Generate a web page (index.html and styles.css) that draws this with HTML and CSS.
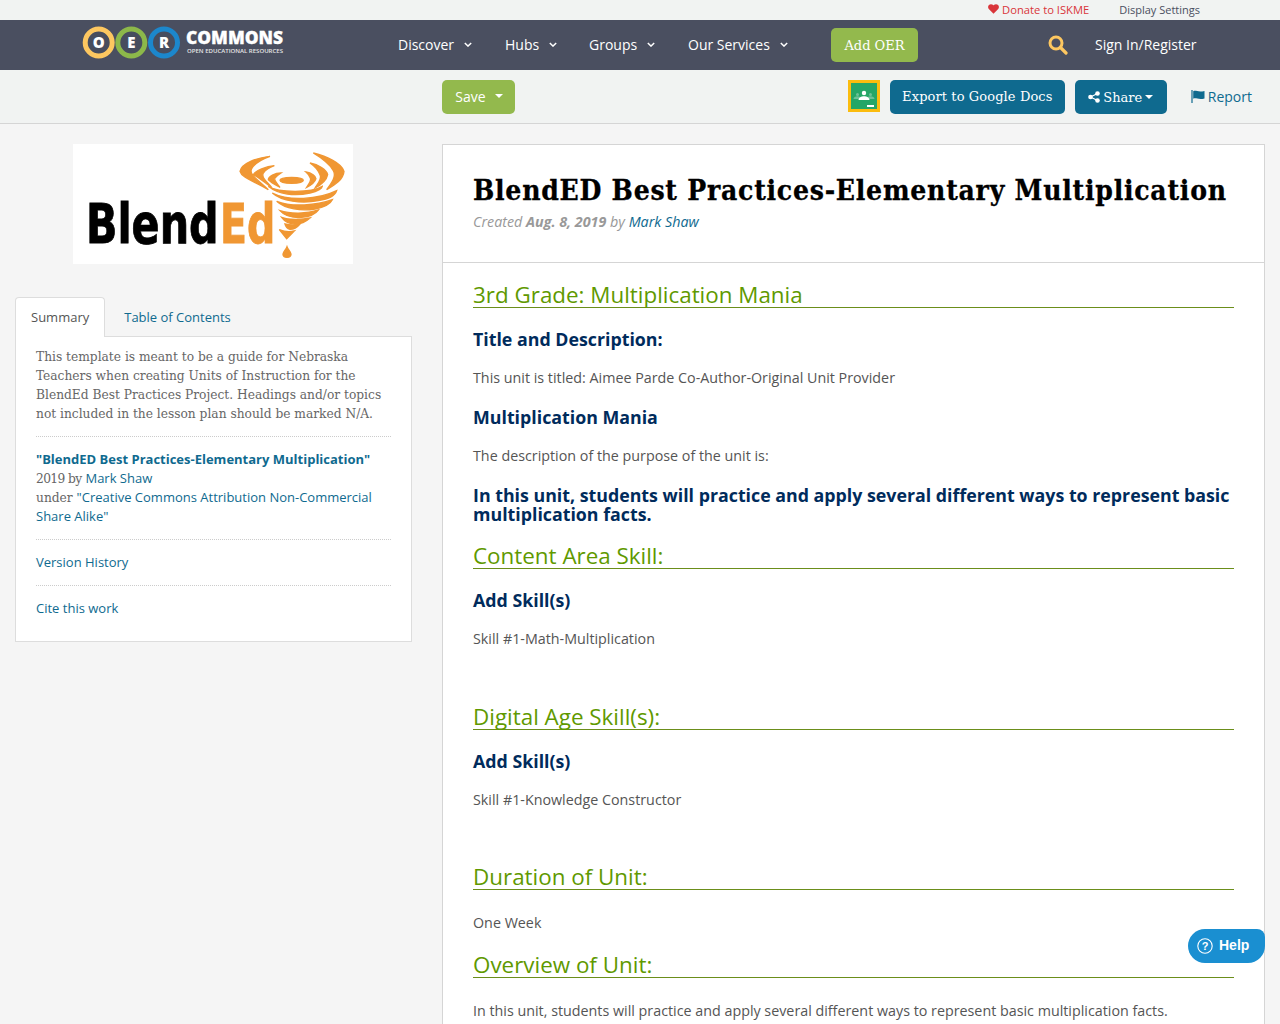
FILE: index.html
```html
<!DOCTYPE html>
<html lang="en">
<head>
    <meta charset="UTF-8">
    <title>BlendED Best Practices-Elementary Multiplication</title>
    <link rel="stylesheet" href="styles.css">
</head>
<body>
    <div class="top-bar">
        <a class="donate" href="#">
            <svg class="heart" viewBox="0 0 24 22" width="11" height="10"><path d="M12 21.500 2.200 11.600C-.6 8.800-.6 4.600 1.900 2.200c2.600-2.600 6.800-2.500 9.400.2l.7.800.7-.8c2.600-2.700 6.800-2.800 9.400-.2 2.500 2.400 2.500 6.600-.3 9.400z" fill="#d9353a"/></svg>
            Donate to ISKME</a>
        <a class="settings" href="#">Display Settings</a>
    </div>

    <nav class="main-nav">
        <a class="logo" href="#">
            <svg viewBox="0 0 214 40" width="214" height="40">
                <circle cx="16.700" cy="17.500" r="13.500" fill="#474d5e" stroke="#fdc760" stroke-width="5"/>
                <circle cx="49.300" cy="17.500" r="13.500" fill="#474d5e" stroke="#8cb84a" stroke-width="5"/>
                <circle cx="82" cy="17.500" r="13.500" fill="#474d5e" stroke="#1c87cc" stroke-width="5"/>
                <text class="logo-letter" x="16.700" y="23">O</text>
                <text class="logo-letter" x="49.300" y="23">E</text>
                <text class="logo-letter" x="82" y="23">R</text>
                <text class="logo-name" x="104" y="19" textLength="97" lengthAdjust="spacingAndGlyphs">COMMONS</text>
                <text class="logo-sub" x="105" y="28" textLength="96" lengthAdjust="spacingAndGlyphs">OPEN EDUCATIONAL RESOURCES</text>
            </svg>
        </a>
        <ul class="nav-links">
            <li class="w-discover"><a href="#">Discover</a><svg class="chev" viewBox="0 0 10 6" width="8" height="5"><path d="M1 1l4 4 4-4" fill="none" stroke="#fff" stroke-width="1.800"/></svg></li>
            <li class="w-hubs"><a href="#">Hubs</a><svg class="chev" viewBox="0 0 10 6" width="8" height="5"><path d="M1 1l4 4 4-4" fill="none" stroke="#fff" stroke-width="1.800"/></svg></li>
            <li class="w-groups"><a href="#">Groups</a><svg class="chev" viewBox="0 0 10 6" width="8" height="5"><path d="M1 1l4 4 4-4" fill="none" stroke="#fff" stroke-width="1.800"/></svg></li>
            <li class="w-services"><a href="#">Our Services</a><svg class="chev" viewBox="0 0 10 6" width="8" height="5"><path d="M1 1l4 4 4-4" fill="none" stroke="#fff" stroke-width="1.800"/></svg></li>
        </ul>
        <a class="btn btn-green btn-add" href="#">Add OER</a>
        <svg class="search" viewBox="0 0 20 20" width="20" height="20"><circle cx="8" cy="8" r="6" fill="none" stroke="#fdc760" stroke-width="3"/><path d="M12.500 12.500 18 18" stroke="#fdc760" stroke-width="3.200" stroke-linecap="round"/></svg>
        <a class="sign-in" href="#">Sign In/Register</a>
    </nav>

    <div class="toolbar">
        <a class="btn btn-green btn-save" href="#">Save <span class="caret"></span></a>
        <div class="toolbar-right">
            <a class="classroom" href="#">
                <svg viewBox="0 0 26 26" width="26" height="26">
                    <rect width="26" height="26" fill="#25a667"/>
                    <circle cx="6.500" cy="11.500" r="1.500" fill="#6cc197"/>
                    <circle cx="19.500" cy="11.500" r="1.500" fill="#6cc197"/>
                    <path d="M2.500 16c0-2 2-2.800 4-2.800s4 .8 4 2.800zM15.500 16c0-2 2-2.800 4-2.800s4 .8 4 2.800z" fill="#6cc197"/>
                    <circle cx="13" cy="10" r="2.200" fill="#fff"/>
                    <path d="M7.500 17c0-2.500 2.800-3.800 5.500-3.800s5.500 1.300 5.500 3.800z" fill="#fff"/>
                    <rect x="16" y="22" width="7" height="2" fill="#fff"/>
                </svg>
            </a>
            <a class="btn btn-blue btn-export" href="#">Export to Google Docs</a>
            <a class="btn btn-blue btn-share" href="#">
                <svg viewBox="0 0 12 12" width="12" height="12"><circle cx="2.500" cy="6" r="2.300" fill="#fff"/><circle cx="9.500" cy="2.500" r="2.300" fill="#fff"/><circle cx="9.500" cy="9.500" r="2.300" fill="#fff"/><path d="M2.500 6l7-3.500M2.500 6l7 3.500" stroke="#fff" stroke-width="1.200"/></svg>
                Share <span class="caret"></span></a>
            <a class="report" href="#">
                <svg viewBox="0 0 14 13" width="14" height="13"><path d="M1 0v13" stroke="#0f6a8f" stroke-width="1.200"/><path d="M2.200 1.200C5 0 7 2.600 13.500 1v7.500C7.500 10 5 7.500 2.200 8.700z" fill="#0f6a8f"/></svg>
                Report</a>
        </div>
    </div>

    <div class="page">
        <aside class="sidebar">
            <div class="cover">
                <svg viewBox="0 0 280 120" width="280" height="120">
                    <rect width="280" height="120" fill="#fff"/>
                    <text class="cover-blend" transform="translate(13 99) scale(.82 1)">Blend</text>
                    <text class="cover-ed" transform="translate(147 99) scale(.785 1)">Ed</text>
                    <g fill="#f09733" stroke="#f09733" stroke-width="4" transform="translate(162 4) scale(.3333)">
                        <path d="M105 25C65 30 20 45 15 70C20 90 60 100 100 125C70 95 40 80 50 62C60 45 85 32 105 25z"/>
                        <path d="M118 53C95 55 60 68 55 80C75 90 90 105 110 118C95 100 78 88 85 75C92 65 105 58 118 53z"/>
                        <path d="M138 75C120 75 100 85 100 95C110 105 125 112 135 118C125 105 115 95 120 90C125 85 130 80 138 75z"/>
                        <path d="M235 15C275 25 320 45 327 70C325 95 300 110 275 125C290 105 305 85 295 68C285 50 260 30 235 15z"/>
                        <path d="M225 45C250 50 275 65 278 80C275 95 260 110 240 120C250 105 262 92 255 80C250 68 240 55 225 45z"/>
                        <path d="M213 72C230 75 243 85 243 92C240 102 228 112 215 118C222 108 230 98 226 90C224 84 220 78 213 72z"/>
                        <ellipse cx="170" cy="97" rx="35" ry="9"/>
                        <path d="M100 115C130 135 230 135 262 115C262 120 250 130 225 135C180 145 130 140 100 115z"/>
                        <path d="M112 135C160 160 250 155 305 128C300 145 280 152 250 158C200 168 140 160 112 135z"/>
                        <path d="M125 160C170 178 245 172 292 155C285 170 265 178 240 183C200 190 150 183 125 160z"/>
                        <path d="M135 188C165 198 215 198 250 186C240 200 220 206 200 208C175 210 150 205 135 188z"/>
                        <path d="M140 208C160 216 200 216 225 210C212 222 195 228 180 228C165 228 150 222 140 208z"/>
                        <path d="M150 228C165 232 180 232 195 228C185 240 172 244 165 244C158 242 152 236 150 228z"/>
                        <path d="M133 245C145 250 165 252 178 249L155 272z"/>
                        <path d="M156 296C160 306 168 312 168 318C168 325 162 328 156 328C150 328 144 325 144 318C144 312 152 306 156 296z"/>
                    </g>
                </svg>
            </div>
            <div class="tabs">
                <a class="tab active" href="#">Summary</a>
                <a class="tab" href="#">Table of Contents</a>
            </div>
            <div class="tab-panel">
                <p class="summary">This template is meant to be a guide for Nebraska Teachers when creating Units of Instruction for the BlendEd Best Practices Project. Headings and/or topics not included in the lesson plan should be marked N/A.</p>
                <div class="panel-block">
                    <a class="strong-link" href="#">"BlendED Best Practices-Elementary Multiplication"</a><br>
                    <span class="year">2019 by</span> <a href="#">Mark Shaw</a><br>
                    under <a href="#">"Creative Commons Attribution Non-Commercial</a><br>
                    <a href="#">Share Alike"</a>
                </div>
                <div class="panel-block"><a href="#">Version History</a></div>
                <div class="panel-block"><a href="#">Cite this work</a></div>
            </div>
        </aside>

        <main class="card">
            <header class="card-head">
                <h1>BlendED Best Practices-Elementary Multiplication</h1>
                <p class="byline">Created <b>Aug. 8, 2019</b> by <a href="#">Mark Shaw</a></p>
            </header>
            <div class="card-body">
                <h2>3rd Grade: Multiplication Mania</h2>
                <h3>Title and Description:</h3>
                <p>This unit is titled: Aimee Parde Co-Author-Original Unit Provider</p>
                <h3>Multiplication Mania</h3>
                <p>The description of the purpose of the unit is:</p>
                <h3>In this unit, students will practice and apply several different ways to represent basic multiplication facts.</h3>
                <h2>Content Area Skill:</h2>
                <h3>Add Skill(s)</h3>
                <p class="gap-after">Skill #1-Math-Multiplication</p>
                <h2>Digital Age Skill(s):</h2>
                <h3>Add Skill(s)</h3>
                <p class="gap-after">Skill #1-Knowledge Constructor</p>
                <h2>Duration of Unit:</h2>
                <p class="after-h2">One Week</p>
                <h2>Overview of Unit:</h2>
                <p class="after-h2">In this unit, students will practice and apply several different ways to represent basic multiplication facts.</p>
            </div>
        </main>
    </div>

    <a class="help" href="#">
        <svg viewBox="0 0 16 16" width="16" height="16"><circle cx="8" cy="8" r="7.200" fill="none" stroke="#fff" stroke-width="1.100"/><text class="help-mark" x="8" y="12">?</text></svg>
        <span class="help-label">Help</span></a>
</body>
</html>
```

FILE: styles.css
```css
html, body {
    height: 100%;
    overflow: hidden;
}
body {
    margin: 0;
    background-color: #f5f5f5;
    font-family: "Open Sans", sans-serif;
    font-size: 14px;
    color: #555;
}
a {
    color: #0f6a8f;
    text-decoration: none;
}
.top-bar {
    display: flex;
    justify-content: flex-end;
    align-items: center;
    gap: 30px;
    height: 18px;
    padding: 0 80px 2px 0;
    background-color: #f1f3f2;
    font-size: 11px;
}
.donate {
    display: flex;
    align-items: center;
    gap: 3px;
    color: #d9353a;
    font-size: 11.200px;
}
.settings {
    color: #4a4f60;
}
.main-nav {
    display: flex;
    align-items: center;
    height: 50px;
    padding-left: 82px;
    background-color: #4a4f60;
}
.logo {
    display: flex;
    width: 316px;
}
.logo-letter {
    font: 800 15px "Open Sans", sans-serif;
    fill: #fff;
    text-anchor: middle;
}
.logo-name {
    font: 800 18px "Open Sans", sans-serif;
    fill: #fff;
    stroke: #fff;
    stroke-width: .3px;
}
.logo-sub {
    font: 600 6px "Open Sans", sans-serif;
    fill: #e6e6e6;
}
.nav-links {
    display: flex;
    width: 433px;
    margin: 0;
    padding: 0;
    list-style: none;
}
.nav-links li {
    display: flex;
    align-items: center;
    gap: 10px;
    padding-bottom: 2px;
}
.nav-links a {
    color: #fff;
}
.w-discover {
    width: 107px;
}
.w-hubs {
    width: 84px;
}
.w-groups {
    width: 99px;
}
.btn {
    display: inline-flex;
    align-items: center;
    justify-content: center;
    height: 34px;
    border-radius: 5px;
    color: #fff;
    box-sizing: border-box;
}
.btn-green {
    background-color: #93b94d;
}
.btn-blue {
    background-color: #0f6a8f;
}
.btn-add {
    width: 87px;
    font-family: "DejaVu Serif", serif;
    font-size: 13px;
}
.search {
    margin-left: 130px;
}
.sign-in {
    margin-left: 27px;
    padding-bottom: 2px;
    color: #fff;
}
.toolbar {
    display: flex;
    align-items: flex-start;
    justify-content: space-between;
    height: 43px;
    padding: 10px 28px 0 442px;
    background-color: #f1f3f2;
    border-bottom: 1px solid #d5d5d5;
}
.btn-save {
    width: 73px;
    gap: 9px;
    padding: 0 0 2px 1px;
    font-size: 14px;
}
.caret {
    width: 0;
    height: 0;
    border-left: 4.500px solid transparent;
    border-right: 4.500px solid transparent;
    border-top: 4.500px solid #fff;
}
.toolbar-right {
    display: flex;
    align-items: center;
}
.classroom {
    display: flex;
    margin-right: 10px;
    margin-top: -2px;
    border: 3px solid #fbbc0e;
}
.btn-export {
    width: 175px;
    margin-right: 10px;
    padding-bottom: 2px;
    font-family: "DejaVu Serif", serif;
    font-size: 13px;
    letter-spacing: .1px;
}
.btn-share {
    width: 92px;
    gap: 3px;
    font-family: "DejaVu Serif", serif;
    font-size: 13px;
}
.btn-share .caret {
    border-width: 4px 4px 0;
}
.report {
    display: flex;
    align-items: center;
    gap: 3px;
    margin-left: 24px;
    padding-bottom: 2px;
}
.page {
    display: flex;
    align-items: flex-start;
    gap: 30px;
    padding: 20px 15px 0;
}
.sidebar {
    width: 397px;
    flex-shrink: 0;
}
.cover {
    display: flex;
    margin: 0 0 33px 58px;
}
.cover-blend, .cover-ed {
    font: 700 56px "DejaVu Sans Condensed", "DejaVu Sans", sans-serif;
    stroke-width: .8px;
}
.cover-blend {
    fill: #000;
    stroke: #000;
}
.cover-ed {
    fill: #f09733;
    stroke: #f09733;
}
.tabs {
    display: flex;
    font-size: 13px;
}
.tab {
    height: 38px;
    padding: 0 18px;
    line-height: 39px;
    border: 1px solid transparent;
    border-bottom: none;
}
.tab.active {
    position: relative;
    z-index: 1;
    margin-bottom: -1px;
    height: 39px;
    padding: 0 15px;
    border-color: #ddd;
    border-radius: 4px 4px 0 0;
    background-color: #fff;
    color: #555;
}
.tab-panel {
    padding: 10px 20px;
    background-color: #fff;
    border: 1px solid #ddd;
    font-size: 13px;
    line-height: 19px;
}
.summary {
    margin: 0;
    padding-bottom: 13px;
    font-family: "DejaVu Serif Condensed", "DejaVu Serif", serif;
    font-size: 13.600px;
    color: #666;
}
.panel-block {
    padding: 13px 0;
    border-top: 1px dotted #ccc;
    font-family: "DejaVu Serif Condensed", "DejaVu Serif", serif;
    font-size: 13.600px;
    color: #666;
}
.panel-block a {
    font-family: "Open Sans", sans-serif;
    font-size: 13px;
}
.year {
    letter-spacing: -.6px;
}
.strong-link {
    font-weight: 700;
}
.card {
    flex: 1;
    min-height: 1000px;
    background-color: #fff;
    border: 1px solid #d5d5d5;
}
.card-head {
    height: 117px;
    padding: 0 30px;
    border-bottom: 1px solid #d5d5d5;
}
h1 {
    margin: 0;
    padding-top: 29px;
    font-family: "DejaVu Serif Condensed", "DejaVu Serif", serif;
    font-size: 28px;
    letter-spacing: .75px;
    line-height: 34px;
    font-weight: 700;
    color: #000;
    white-space: nowrap;
    -webkit-text-stroke: .3px #000;
}
.byline {
    margin: 4px 0 0;
    font-size: 14.300px;
    font-style: italic;
    color: #999;
}
.card-body {
    padding: 16px 30px 0;
}
h2 {
    margin: 0;
    padding-top: 4px;
    font-size: 22.400px;
    line-height: 24px;
    font-weight: 400;
    color: #5f9900;
    border-bottom: 1px solid #6b8e1a;
}
h3 {
    margin: 21px 0 0;
    font-size: 17.800px;
    line-height: 19px;
    font-weight: 700;
    color: #002b5c;
}
h2 + h3 {
    margin-top: 22px;
}
.card-body p {
    margin: 19px 0 0;
    font-size: 14.300px;
    line-height: 19px;
}
.card-body h3 + h2, .card-body p + h2 {
    margin-top: 16px;
}
.card-body p.gap-after {
    margin-bottom: 52.500px;
}
.card-body p.after-h2 {
    margin-top: 23px;
    margin-bottom: 17px;
}
.help {
    position: fixed;
    top: 929px;
    right: 15px;
    display: flex;
    align-items: center;
    gap: 6px;
    width: 77px;
    height: 34px;
    padding-left: 9px;
    box-sizing: border-box;
    background-color: #1a8fd1;
    border-radius: 17px 8px 17px 17px;
    font: 700 14px "Liberation Sans", Arial, sans-serif;
    color: #fff;
}
.help-label {
    padding-bottom: 2px;
}
.help-mark {
    font: 700 11px "Liberation Sans", Arial, sans-serif;
    fill: #fff;
    text-anchor: middle;
}
```
